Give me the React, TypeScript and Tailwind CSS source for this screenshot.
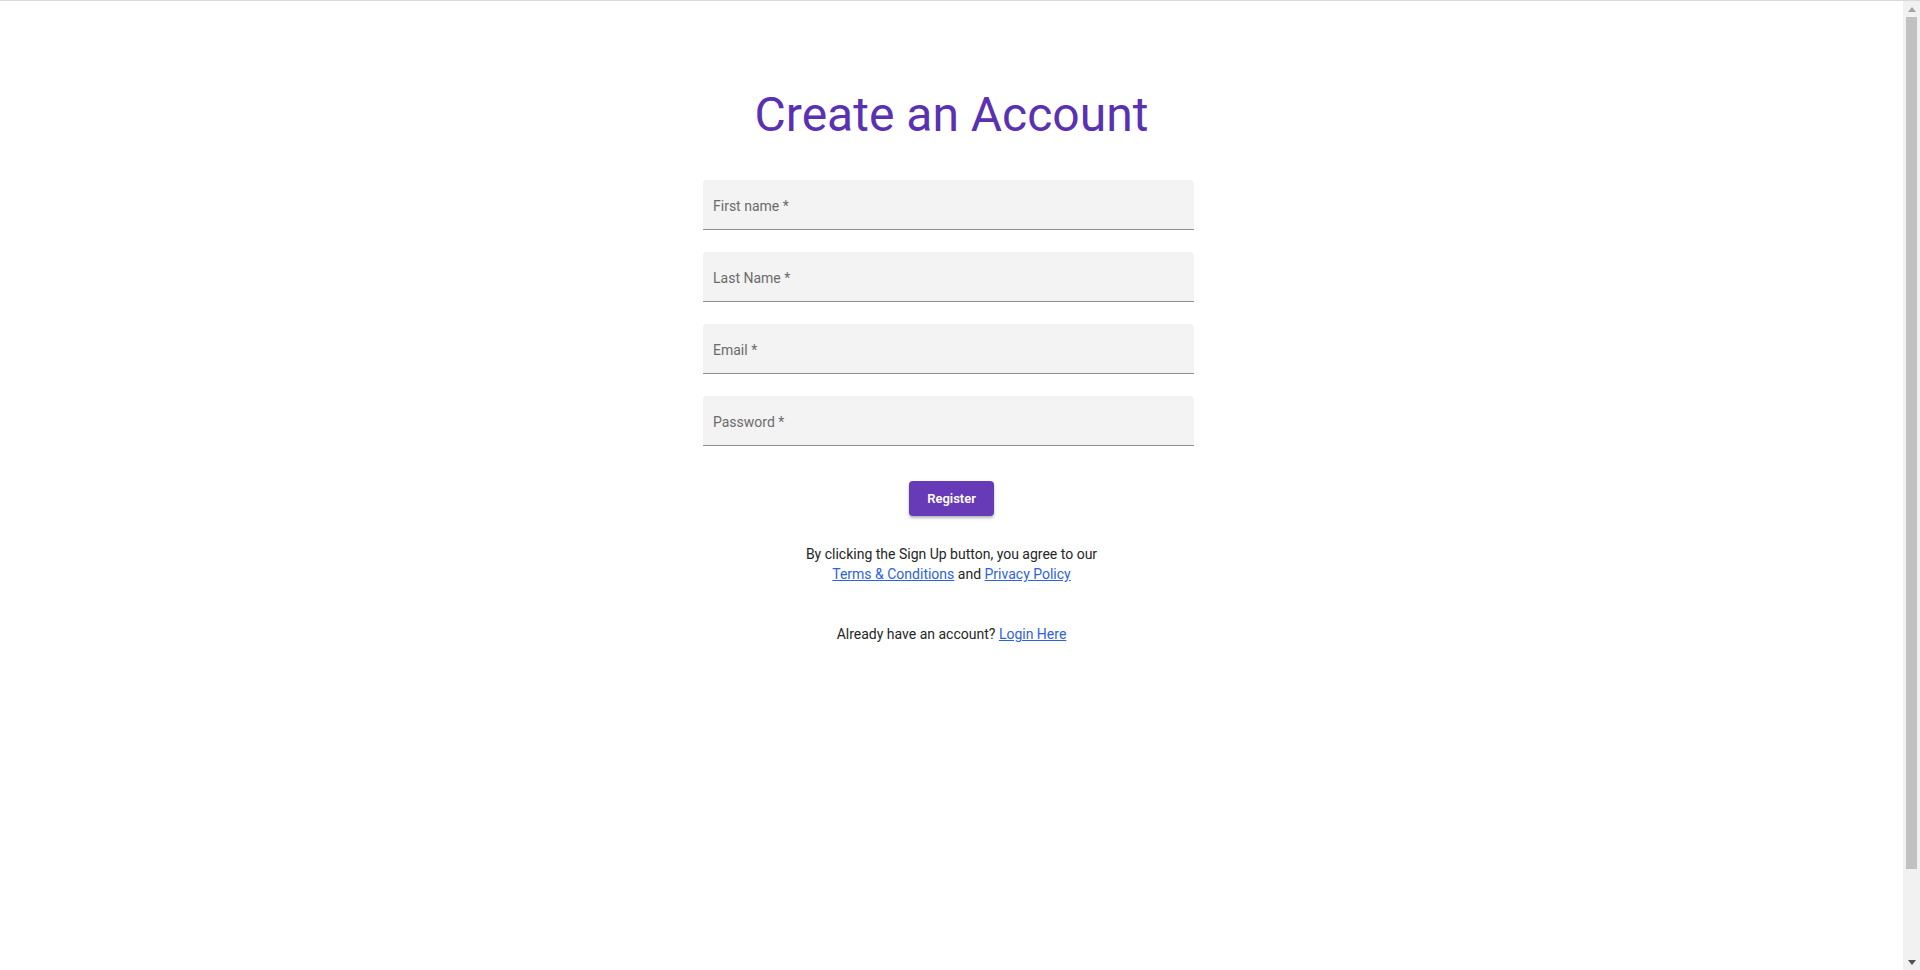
const FIELDS = ["First name *", "Last Name *", "Email *", "Password *"];

export default function App() {
  return (
    <div className="flex h-[970px] overflow-hidden border-t border-[#d9d9d9] bg-white font-['Roboto',sans-serif]">
      <main className="flex-1">
        <div className="mx-auto flex w-[497px] flex-col items-center pt-[86px]">
          <h1 className="text-[48px] leading-[56px] font-normal text-[#5a31b0]">
            Create an Account
          </h1>

          <form className="mt-[37px] flex w-[491px] flex-col gap-[22px] self-start">
            {FIELDS.map((f) => (
              <div
                key={f}
                className="flex h-[50px] items-center rounded-t-[4px] border-b border-[#8f8f8f] bg-[#f3f3f3] pt-[3px] pl-[10px]"
              >
                <span className="text-[14px] text-[#6b6b6b]">{f}</span>
              </div>
            ))}
          </form>

          <button
            type="button"
            className="mt-[35px] h-[35px] w-[85px] rounded-[4px] bg-[#673ab7] text-[13px] font-semibold text-white shadow-[0_2px_3px_rgba(0,0,0,0.3)]"
          >
            Register
          </button>

          <p className="mt-[28px] text-center text-[14px] leading-[20px] text-[#262626]">
            By clicking the Sign Up button, you agree to our
            <br />
            <a href="#" className="text-[#2d63dc] underline">
              Terms &amp; Conditions
            </a>{" "}
            and{" "}
            <a href="#" className="text-[#2d63dc] underline">
              Privacy Policy
            </a>
          </p>

          <p className="mt-[40px] text-center text-[14px] leading-[20px] text-[#262626]">
            Already have an account?{" "}
            <a href="#" className="text-[#2d63dc] underline">
              Login Here
            </a>
          </p>
        </div>
      </main>

      {/* scrollbar */}
      <div className="flex w-[17px] flex-col items-center bg-[#f1f1f1]">
        <div className="flex h-[16px] w-full items-center justify-center">
          <svg width="8" height="5" viewBox="0 0 8 5">
            <path d="M0 5 L4 0 L8 5 Z" fill="#a3a3a3" />
          </svg>
        </div>
        <div className="h-[852px] w-[11px] bg-[#c1c1c1]" />
        <div className="flex-1" />
        <div className="flex h-[16px] w-full items-center justify-center">
          <svg width="8" height="5" viewBox="0 0 8 5">
            <path d="M0 0 L4 5 L8 0 Z" fill="#505050" />
          </svg>
        </div>
      </div>
    </div>
  );
}
